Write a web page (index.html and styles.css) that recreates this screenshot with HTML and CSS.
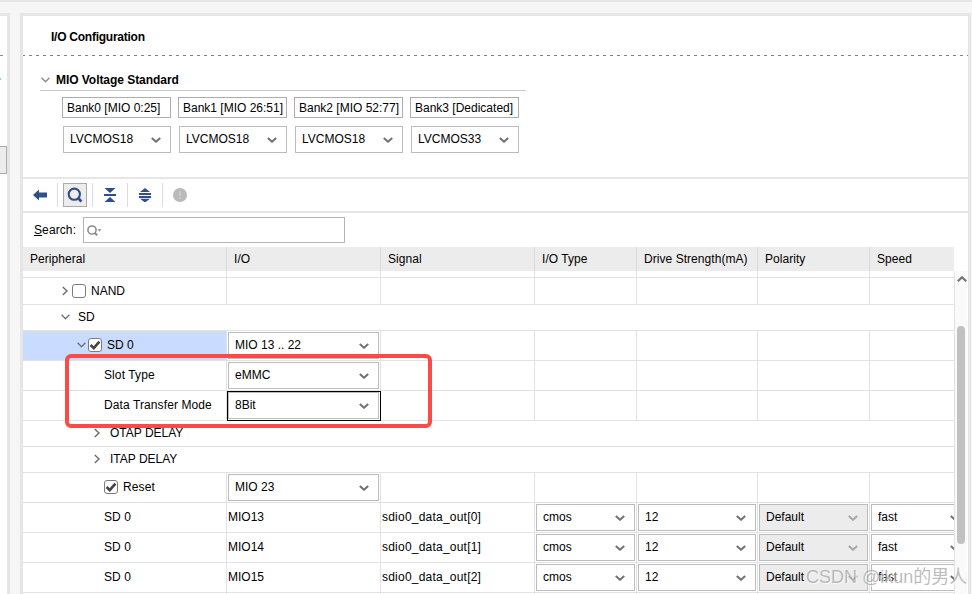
FILE: index.html
```html
<!DOCTYPE html>
<html lang="en">
<head>
    <meta charset="UTF-8">
    <title>I/O Configuration</title>
    <link rel="stylesheet" href="styles.css">
</head>
<body>

    <!-- Icons -->
    <svg class="sprite">
        <symbol id="down" viewBox="0 0 10 6"><path d="M.8 1l4.2 3.7L9.2 1" fill="none" stroke="currentColor" stroke-width="2.1"/></symbol>
        <symbol id="up" viewBox="0 0 10 6"><path d="M.8 5.2l4.2-3.9 4.2 3.9" fill="none" stroke="currentColor" stroke-width="2.2"/></symbol>
        <symbol id="open" viewBox="0 0 9 6"><path d="M.6.8l3.9 4 3.9-4" fill="none" stroke="currentColor" stroke-width="1.3"/></symbol>
        <symbol id="closed" viewBox="0 0 6 10"><path d="M.8 1l4.2 4-4.2 4" fill="none" stroke="currentColor" stroke-width="1.5"/></symbol>
        <symbol id="tick" viewBox="0 0 14 14"><path d="M2.6 7l3.2 3.2 5.6-6.6" fill="none" stroke="currentColor" stroke-width="2.6"/></symbol>
    </svg>

    <!-- Neighbour panel -->
    <div class="side-panel">
        <div class="side-title"></div>
        <div class="side-mark"></div>
        <div class="side-button"></div>
    </div>

    <!-- Main panel -->
    <div class="panel">
        <h1>I/O Configuration</h1>
        <svg class="dashes" width="945" height="1"><path d="M0 .5h945" stroke="#808080" stroke-dasharray="3 4" stroke-dashoffset="1"/></svg>

        <section class="voltage">
            <h2><svg class="open"><use href="#open"/></svg>MIO Voltage Standard</h2>
            <div class="banks">
                <div class="bank"><div class="bank-name">Bank0 [MIO 0:25]</div><div class="select">LVCMOS18<svg><use href="#down"/></svg></div></div>
                <div class="bank"><div class="bank-name">Bank1 [MIO 26:51]</div><div class="select">LVCMOS18<svg><use href="#down"/></svg></div></div>
                <div class="bank"><div class="bank-name">Bank2 [MIO 52:77]</div><div class="select">LVCMOS18<svg><use href="#down"/></svg></div></div>
                <div class="bank"><div class="bank-name">Bank3 [Dedicated]</div><div class="select">LVCMOS33<svg><use href="#down"/></svg></div></div>
            </div>
        </section>

        <div class="toolbar">
            <button class="tool"><svg width="14" height="12" viewBox="0 0 14 12"><path d="M0 6l6-5.5V3.5h8v5H6v3z" fill="currentColor"/></svg></button>
            <button class="tool active"><svg width="16" height="16" viewBox="0 0 16 16"><circle cx="7.3" cy="7.2" r="5.6" fill="none" stroke="currentColor" stroke-width="2.1"/><path d="M10.8 10.8l3.6 3.6" stroke="currentColor" stroke-width="2.8"/></svg></button>
            <button class="tool"><svg width="12" height="14" viewBox="0 0 12 14"><path d="M.5 0h11L6 5zM0 6h12v2H0zM.5 14h11L6 9z" fill="currentColor"/></svg></button>
            <button class="tool"><svg width="12" height="14" viewBox="0 0 12 14"><path d="M1 4h10L6 0zM0 5h12v2H0zM0 8h12v2H0zM1 10.8h10L6 14.5z" fill="currentColor"/></svg></button>
            <button class="tool"><svg width="14" height="14" viewBox="0 0 14 14"><circle cx="7" cy="7" r="7" fill="#bababa"/><path d="M7 3v5M7 9.5v1.6" stroke="#cfcfcf" stroke-width="1.6"/></svg></button>
        </div>

        <div class="search">
            <label><u>S</u>earch:</label>
            <div class="search-box"><svg width="15" height="12" viewBox="0 0 15 12"><circle cx="5" cy="5" r="4.1" fill="none" stroke="#8a8a8a" stroke-width="1.5"/><path d="M7.6 7.8l2.6 2.6" stroke="#8a8a8a" stroke-width="2"/><path d="M10.5 4.2h4l-2 2.2z" fill="#8a8a8a"/></svg></div>
        </div>

        <div class="row head">
            <div>Peripheral</div><div>I/O</div><div>Signal</div><div>I/O Type</div><div>Drive Strength(mA)</div><div>Polarity</div><div>Speed</div>
        </div>

        <div class="table">
            <div class="rows">
                <div class="row cut"><div></div><div></div><div></div><div></div><div></div><div></div><div></div></div>
                <div class="row short first">
                    <div class="level1"><svg class="closed"><use href="#closed"/></svg><span class="check"></span>NAND</div>
                    <div></div><div></div><div></div><div></div><div></div><div></div>
                </div>
                <div class="row short group"><div class="level1"><svg class="open"><use href="#open"/></svg>SD</div></div>
                <div class="row">
                    <div class="level2 selected"><svg class="open"><use href="#open"/></svg><span class="check"><svg><use href="#tick"/></svg></span>SD 0</div>
                    <div><div class="select">MIO 13 .. 22<svg><use href="#down"/></svg></div></div>
                    <div></div><div></div><div></div><div></div><div></div>
                </div>
                <div class="row">
                    <div class="level3">Slot Type</div>
                    <div><div class="select">eMMC<svg><use href="#down"/></svg></div></div>
                    <div></div><div></div><div></div><div></div><div></div>
                </div>
                <div class="row">
                    <div class="level3">Data Transfer Mode</div>
                    <div class="focused"><div class="select">8Bit<svg><use href="#down"/></svg></div></div>
                    <div></div><div></div><div></div><div></div><div></div>
                </div>
                <div class="row short group delay"><div><svg class="closed"><use href="#closed"/></svg>OTAP DELAY</div></div>
                <div class="row short group delay"><div><svg class="closed"><use href="#closed"/></svg>ITAP DELAY</div></div>
                <div class="row">
                    <div class="level3"><span class="check"><svg><use href="#tick"/></svg></span>Reset</div>
                    <div><div class="select">MIO 23<svg><use href="#down"/></svg></div></div>
                    <div></div><div></div><div></div><div></div><div></div>
                </div>
                <div class="row">
                    <div class="level3">SD 0</div><div>MIO13</div><div class="signal">sdio0_data_out[0]</div>
                    <div><div class="select">cmos<svg><use href="#down"/></svg></div></div>
                    <div><div class="select">12<svg><use href="#down"/></svg></div></div>
                    <div><div class="select disabled">Default<svg><use href="#down"/></svg></div></div>
                    <div><div class="select speed">fast<svg><use href="#down"/></svg></div></div>
                </div>
                <div class="row">
                    <div class="level3">SD 0</div><div>MIO14</div><div class="signal">sdio0_data_out[1]</div>
                    <div><div class="select">cmos<svg><use href="#down"/></svg></div></div>
                    <div><div class="select">12<svg><use href="#down"/></svg></div></div>
                    <div><div class="select disabled">Default<svg><use href="#down"/></svg></div></div>
                    <div><div class="select speed">fast<svg><use href="#down"/></svg></div></div>
                </div>
                <div class="row">
                    <div class="level3">SD 0</div><div>MIO15</div><div class="signal">sdio0_data_out[2]</div>
                    <div><div class="select">cmos<svg><use href="#down"/></svg></div></div>
                    <div><div class="select">12<svg><use href="#down"/></svg></div></div>
                    <div><div class="select disabled">Default<svg><use href="#down"/></svg></div></div>
                    <div><div class="select speed">fast<svg><use href="#down"/></svg></div></div>
                </div>
                <div class="row"><div></div><div></div><div></div><div></div><div></div><div></div><div></div></div>
            </div>
            <div class="scrollbar"><svg><use href="#up"/></svg><div class="thumb"></div></div>
        </div>
    </div>

    <div class="highlight"></div>
    <div class="watermark">CSDN @ikun的男人</div>

</body>
</html>
```

FILE: styles.css
```css
* {
    box-sizing: border-box;
}

body {
    margin: 0;
    width: 972px;
    height: 594px;
    overflow: hidden;
    position: relative;
    display: flex;
    gap: 10px;
    padding-top: 11px;
    border-top: 2px solid #e6e6e6;
    background: #f6f6f6;
    font: 12px/14px "Liberation Sans", Arial, sans-serif;
    color: #000;
}

svg {
    display: block;
    flex: none;
}

.sprite {
    display: none;
}

/* Neighbour panel */
.side-panel {
    width: 10px;
    height: 600px;
    flex: none;
    background: #fff;
    border-top: 3px solid #e6e6e6;
    border-right: 3px solid #e6e6e6;
}

.side-title {
    width: 3px;
    height: 40px;
    border-bottom: 1px solid #8c8c8c;
}

.side-mark {
    width: 1px;
    height: 2px;
    margin-top: 22px;
    background: #6fdcf0;
}

.side-button {
    height: 28px;
    margin-top: 66px;
    background: #ececec;
    border: 1px solid #ababab;
    border-left: 0;
}

/* Main panel */
.panel {
    width: 951px;
    height: 600px;
    flex: none;
    background: #fff;
    border: 3px solid #e6e6e6;
}

h1 {
    margin: 0;
    height: 39px;
    padding: 14px 0 0 28px;
    font-size: 12px;
    letter-spacing: -0.25px;
}

.voltage {
    height: 121px;
    padding: 17px 0 0 17px;
}

h2 {
    display: flex;
    align-items: center;
    margin: 0;
    width: 486px;
    height: 18px;
    padding-bottom: 4px;
    border-bottom: 1px solid #c8c8c8;
    font-size: 12px;
    letter-spacing: -0.05px;
}

h2 .open {
    margin: 0 6px 0 1px;
    color: #8a8a8a;
}

.banks {
    display: flex;
    gap: 7px;
    padding: 6px 0 0 22px;
}

.bank {
    width: 109px;
}

.bank-name {
    height: 21px;
    padding: 3px 0 0 4px;
    margin-bottom: 8px;
    border: 1px solid #adadad;
    white-space: nowrap;
}

.bank .select {
    margin-left: 1px;
}

.select {
    display: flex;
    align-items: center;
    justify-content: space-between;
    height: 27px;
    padding: 0 9px 1px 6px;
    border: 1px solid #bcbcbc;
    background: #fff;
}

.select svg {
    width: 10px;
    height: 6px;
    margin-top: 2px;
    color: #737373;
}

/* Toolbar */
.toolbar {
    display: flex;
    align-items: center;
    gap: 11px;
    height: 36px;
    padding-left: 5px;
    border-top: 2px solid #e6e6e6;
    border-bottom: 2px solid #e6e6e6;
}

.tool {
    display: flex;
    align-items: center;
    justify-content: center;
    width: 24px;
    height: 24px;
    padding: 0;
    border: 0;
    background: none;
    color: #2f4f87;
}

.tool + .tool {
    box-shadow: -5px 0 0 0 #fff, -6px 0 0 0 #dcdcdc;
}

.tool.active {
    background: #ececec;
    border: 1px solid #ababab;
}

.search {
    display: flex;
    height: 34px;
    padding: 4px 0 0 11px;
}

.search label {
    width: 49px;
    padding-top: 6px;
    letter-spacing: 0.1px;
}

.search-box {
    width: 262px;
    height: 26px;
    padding: 7px 0 0 3px;
    border: 1px solid #b4b4b4;
}

/* Peripheral table */
.row {
    display: grid;
    grid-template-columns: 204px 154px 154px 102px 121px 112px 84px;
    width: 931px;
    height: 30px;
}

.row > div {
    display: flex;
    align-items: center;
    min-width: 0;
    padding: 0 1px 1px;
    border-right: 1px solid #e2e2e2;
    border-bottom: 1px solid #e2e2e2;
    white-space: nowrap;
}

.row > div:last-child {
    border-right: 0;
}

.row .select {
    flex: 1;
    margin-bottom: -1px;
}

.row.head {
    height: 24px;
    background: #ececec;
}

.row.head > div {
    padding-left: 7px;
    border-bottom: 0;
    border-right-color: #dadada;
    letter-spacing: 0.05px;
}

.row.cut {
    height: 7px;
}

.row.short {
    height: 26px;
}

.row.first {
    height: 27px;
}

.row.group {
    grid-template-columns: 1fr;
}

.row .level1 {
    padding-left: 38px;
}

.row .level2 {
    padding-left: 54px;
}

.row .level3 {
    padding-left: 81px;
    letter-spacing: 0.1px;
}

.row .signal {
    letter-spacing: 0.22px;
}

.row.delay > div {
    padding-left: 71px;
}

.row .selected {
    background: #c9dcff;
}

.open {
    width: 9px;
    height: 6px;
    color: #6e6e6e;
}

.closed {
    width: 6px;
    height: 10px;
    color: #6e6e6e;
}

.level1 .open {
    margin-right: 8px;
}

.level1 .closed {
    margin: 0 4px 0 1px;
}

.level2 .open {
    margin-right: 2px;
}

.delay .closed {
    margin-right: 10px;
}

.check {
    width: 14px;
    height: 14px;
    margin-right: 5px;
    border: 1px solid #7c7c7c;
    border-radius: 3px;
    background: #fff;
}

.check svg {
    width: 14px;
    height: 14px;
    margin: -1px;
    color: #444;
}

.row .focused {
    outline: 1px solid #000;
    outline-offset: -1px;
}

.select.disabled {
    background: #ececec;
}

.select.disabled svg {
    color: #a8a8a8;
}

.row .select.speed {
    flex: none;
    width: 99px;
}

.table {
    display: flex;
}

.rows {
    width: 931px;
    overflow: hidden;
}

.scrollbar {
    width: 13px;
    height: 340px;
    padding: 5px 0 0 2px;
    background: #fafafa;
    border-left: 1px solid #e2e2e2;
}

.scrollbar svg {
    width: 10px;
    height: 6px;
    color: #737373;
}

.thumb {
    width: 8px;
    height: 218px;
    margin-top: 44px;
    border-radius: 4px;
    background: #c1c1c1;
}

/* Marks drawn over the window */
.highlight {
    position: absolute;
    left: 65px;
    top: 352px;
    width: 367px;
    height: 74px;
    border: 4px solid #fa4b46;
    border-radius: 6px;
}

.watermark {
    position: absolute;
    left: 806px;
    top: 563px;
    font: 18px/24px "Liberation Sans", "Noto Sans CJK SC", sans-serif;
    color: rgba(150, 150, 150, 0.65);
    text-shadow: 1px 1px 1px rgba(255, 255, 255, 0.8);
    white-space: nowrap;
}
```
